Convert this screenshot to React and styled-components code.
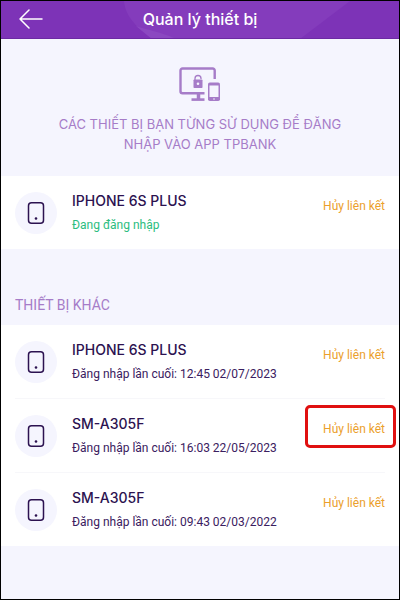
import React from 'react';
import styled, { createGlobalStyle } from 'styled-components';

const GlobalStyle = createGlobalStyle`
    * {
        box-sizing: border-box;
    }

    body {
        margin: 0;
        background: #f5f5fe;
        font-family: Roboto, "Liberation Sans", sans-serif;
        color: #2c1250;
    }
`
const Screen = styled.div`
    min-height: 100vh;
    border: 1px solid #000;
    background: #f5f5fe;
`
const Header = styled.header`
    position: relative;
    display: grid;
    grid-template-columns: 48px 1fr 48px;
    align-items: center;
    height: 38px;
    padding: 0 8px 4px;
    background: #7d33b7;
    border-bottom: 1px solid #6c2aa3;
    overflow: hidden;
`
const HeaderShape = styled.svg`
    position: absolute;
    top: 0;
    left: 31%;
    width: 226px;
    height: 38px;
`
const BackButton = styled.button`
    position: relative;
    display: flex;
    padding: 8px;
    border: none;
    background: transparent;
    color: #fff;
    cursor: pointer;
`
const Title = styled.h1`
    position: relative;
    margin: 0;
    color: #fff;
    font-family: Inter, sans-serif;
    font-size: 16px;
    line-height: 20px;
    font-weight: 500;
    text-align: center;
`
const Intro = styled.section`
    display: flex;
    flex-direction: column;
    align-items: center;
    gap: 12px;
    padding: 28px 40px 22px;
`
const IntroText = styled.p`
    margin: 0;
    color: #a67cc8;
    font-family: Inter, sans-serif;
    font-size: 13px;
    line-height: 20px;
    text-align: center;
`
const SectionTitle = styled.h2`
    margin: 0;
    padding: 46px 14px 10px;
    color: #a67cc8;
    font-size: 14px;
    line-height: 20px;
    font-weight: 400;
`
const DeviceList = styled.ul`
    margin: 0;
    padding: 0 14px;
    list-style: none;
    background: #fff;
`
const DeviceRow = styled.li`
    display: flex;
    align-items: center;
    gap: 15px;
    height: 73px;

    & + & {
        height: 74px;
        border-top: 1px solid #f7f7fa;
    }
`
const IconCircle = styled.div`
    display: flex;
    align-items: center;
    justify-content: center;
    flex: none;
    width: 42px;
    height: 42px;
    border-radius: 50%;
    background: #f5f5fe;
`
const DeviceInfo = styled.div`
    flex: 1;
    min-width: 0;
`
const DeviceName = styled.div`
    margin-bottom: 6px;
    font-family: Inter, sans-serif;
    font-size: 14px;
    line-height: 18px;
    font-weight: 500;
`
const DeviceStatus = styled.div`
    color: ${props => (props.$active ? '#2bbd80' : '#3a2060')};
    font-size: 12px;
    line-height: 18px;
`
const UnlinkButton = styled.button`
    position: relative;
    align-self: flex-start;
    margin-top: 20px;
    padding: 0;
    border: none;
    background: transparent;
    color: #eba02b;
    font-family: inherit;
    font-size: 12px;
    line-height: 20px;
    cursor: pointer;
`
const Highlight = styled.span`
    position: absolute;
    inset: -14px -11px -9px -18px;
    border: 3px solid #e01010;
    border-radius: 5px;
`

const otherDevices = [
    { id: 1, name: 'IPHONE 6S PLUS', status: 'Đăng nhập lần cuối: 12:45 02/07/2023' },
    { id: 2, name: 'SM-A305F', status: 'Đăng nhập lần cuối: 16:03 22/05/2023', highlighted: true },
    { id: 3, name: 'SM-A305F', status: 'Đăng nhập lần cuối: 09:43 02/03/2022' },
];

function ArrowIcon() {
    return (
        <svg width="26" height="20" viewBox="0 0 26 20" fill="none" stroke="currentColor" strokeWidth="1.5" strokeLinecap="round" strokeLinejoin="round">
            <path d="M25 10H3M12 1L3 10l9 9" />
        </svg>
    )
}

function PhoneIcon() {
    return (
        <svg width="18" height="24" viewBox="0 0 18 24" fill="none">
            <rect x="1.5" y="1.75" width="15" height="20.5" rx="3" stroke="#2c1250" strokeWidth="1.5" />
            <circle cx="9" cy="17.5" r="1.3" fill="#2c1250" />
        </svg>
    )
}

function DevicesIcon() {
    return (
        <svg width="42" height="35" viewBox="0 0 42 35" fill="none" stroke="#a67cc8">
            <path d="M35.7 12V3.5a2 2 0 0 0-2-2H3.5a2 2 0 0 0-2 2v20.8a2 2 0 0 0 2 2H25.5" strokeWidth="2.4" />
            <path d="M19.5 26v6.500" strokeWidth="3.5" />
            <path d="M12.5 32.6H25.5" strokeWidth="2.6" />
            <path d="M16 13v-1.500a3 3 0 0 1 6 0V12" strokeWidth="1.3" />
            <rect x="14.500" y="12.5" width="9" height="8.5" rx="0.8" fill="#a67cc8" stroke="none" />
            <circle cx="19" cy="16.7" r="1.3" fill="#f5f5fe" stroke="none" />
            <rect x="29" y="15.5" width="12" height="18.5" rx="1.8" fill="#a67cc8" stroke="none" />
            <rect x="30.5" y="18.5" width="9" height="11.5" fill="#f5f5fe" stroke="none" />
            <circle cx="35" cy="32" r="0.8" fill="#f5f5fe" stroke="none" />
        </svg>
    )
}

function Device({ name, status, active, highlighted }) {
    return (
        <DeviceRow>
            <IconCircle>
                <PhoneIcon />
            </IconCircle>
            <DeviceInfo>
                <DeviceName>{name}</DeviceName>
                <DeviceStatus $active={active}>{status}</DeviceStatus>
            </DeviceInfo>
            <UnlinkButton type="button">
                Hủy liên kết
                {highlighted && <Highlight />}
            </UnlinkButton>
        </DeviceRow>
    )
}

export default function App() {
    return (
        <>
            <GlobalStyle />
            <Screen>
                <Header>
                    <HeaderShape viewBox="0 0 226 38" aria-hidden="true">
                        <path d="M0 0C1 15 12 26 28 38H176L226 0Z" fill="#843cbc" />
                        <path d="M12 25C24 29 40 32 52 38H28Z" fill="#8b48c1" />
                    </HeaderShape>
                    <BackButton type="button" aria-label="Quay lại">
                        <ArrowIcon />
                    </BackButton>
                    <Title>Quản lý thiết bị</Title>
                </Header>
                <main>
                    <Intro>
                        <DevicesIcon />
                        <IntroText>CÁC THIẾT BỊ BẠN TỪNG SỬ DỤNG ĐỂ ĐĂNG NHẬP VÀO APP TPBANK</IntroText>
                    </Intro>
                    <DeviceList>
                        <Device name="IPHONE 6S PLUS" status="Đang đăng nhập" active />
                    </DeviceList>
                    <SectionTitle>THIẾT BỊ KHÁC</SectionTitle>
                    <DeviceList>
                        {otherDevices.map(device => (
                            <Device key={device.id} {...device} />
                        ))}
                    </DeviceList>
                </main>
            </Screen>
        </>
    )
}
